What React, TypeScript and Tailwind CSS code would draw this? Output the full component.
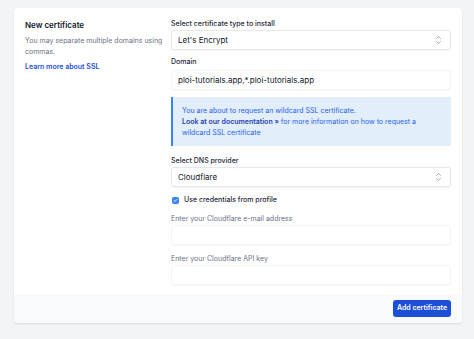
import React from "react";

function Chevrons() {
  return (
    <svg width="7" height="10" viewBox="0 0 7 10" fill="none" className="text-gray-400">
      <path d="M1.5 3.5L3.5 1.5L5.5 3.5" stroke="currentColor" strokeWidth="0.9" strokeLinecap="round" strokeLinejoin="round" />
      <path d="M1.5 6.5L3.5 8.5L5.5 6.5" stroke="currentColor" strokeWidth="0.9" strokeLinecap="round" strokeLinejoin="round" />
    </svg>
  );
}

function Select({ value }: { value: string }) {
  return (
    <div className="flex h-[20px] items-center justify-between rounded-[3px] border border-gray-200 bg-white pl-[6px] pr-[8px] text-[8px] text-gray-900 shadow-[0_1px_1px_rgba(0,0,0,0.04)]">
      <span>{value}</span>
      <Chevrons />
    </div>
  );
}

function Input({ value }: { value?: string }) {
  return (
    <div className="flex h-[20px] items-center rounded-[3px] border border-gray-100 bg-white pl-[6px] text-[8px] text-gray-900 shadow-[0_1px_1px_rgba(0,0,0,0.03)]">
      {value}
    </div>
  );
}

export default function App() {
  return (
    <div className="min-h-[339px] bg-[#f3f4f6] pt-[8px] pl-[14px] font-['Inter',sans-serif]">
      <div className="w-[448px] overflow-hidden rounded-[4px] bg-white shadow-[0_1px_2px_rgba(0,0,0,0.12)]">
        <div className="flex px-[11px] pt-[10px] pb-[9px]">
          <div className="w-[145px] shrink-0 pt-[1px]">
            <h2 className="text-[8px] leading-[12px] font-semibold text-gray-900">New certificate</h2>
            <p className="mt-[4px] pr-[4px] text-[7px] leading-[11px] text-gray-500">
              You may separate multiple domains using commas.
            </p>
            <a className="mt-[4px] block text-[7px] leading-[11px] font-semibold text-[#1d4ed8]">Learn more about SSL</a>
          </div>
          <div className="flex-1 pl-[1px]">
            <label className="block text-[7px] leading-[11px] font-medium text-gray-800">Select certificate type to install</label>
            <div className="mt-[1px]">
              <Select value="Let's Encrypt" />
            </div>
            <label className="mt-[6px] block text-[7px] leading-[11px] font-medium text-gray-800">Domain</label>
            <div className="mt-[3px]">
              <Input value="ploi-tutorials.app,*.ploi-tutorials.app" />
            </div>
            <div className="mt-[7px] border-l-2 border-[#3b82f6] bg-[#e3eefb] py-[8px] pl-[9px] pr-[8px] text-[7px] leading-[11px] text-[#2563eb]">
              <p>You are about to request an wildcard SSL certificate.</p>
              <p>
                <b className="font-semibold text-[#1e40af]">Look at our documentation »</b> for more information on how to request a wildcard SSL certificate
              </p>
            </div>
            <label className="mt-[9px] block text-[7px] leading-[11px] font-medium text-gray-800">Select DNS provider</label>
            <div className="mt-[1px]">
              <Select value="Cloudflare" />
            </div>
            <div className="mt-[8px] flex h-[11px] items-center gap-[5px] pl-[1px]">
              <span className="flex h-[7px] w-[7px] items-center justify-center rounded-[2px] bg-[#3b82f6]">
                <svg width="5" height="5" viewBox="0 0 5 5" fill="none">
                  <path d="M1 2.6L2 3.5L4 1.4" stroke="white" strokeWidth="0.9" strokeLinecap="round" strokeLinejoin="round" />
                </svg>
              </span>
              <span className="text-[7px] font-medium text-gray-800">Use credentials from profile</span>
            </div>
            <label className="mt-[7px] block text-[7px] leading-[11px] text-gray-500">Enter your Cloudflare e-mail address</label>
            <div className="mt-[1px]">
              <Input />
            </div>
            <label className="mt-[8px] block text-[7px] leading-[11px] text-gray-500">Enter your Cloudflare API key</label>
            <div className="mt-[1px]">
              <Input />
            </div>
          </div>
        </div>
        <div className="flex h-[29px] items-center justify-end bg-[#f9fafb] px-[11px]">
          <button className="h-[17px] w-[58px] rounded-[3px] bg-[#1d4ed8] text-[7px] font-semibold text-white">Add certificate</button>
        </div>
      </div>
    </div>
  );
}
